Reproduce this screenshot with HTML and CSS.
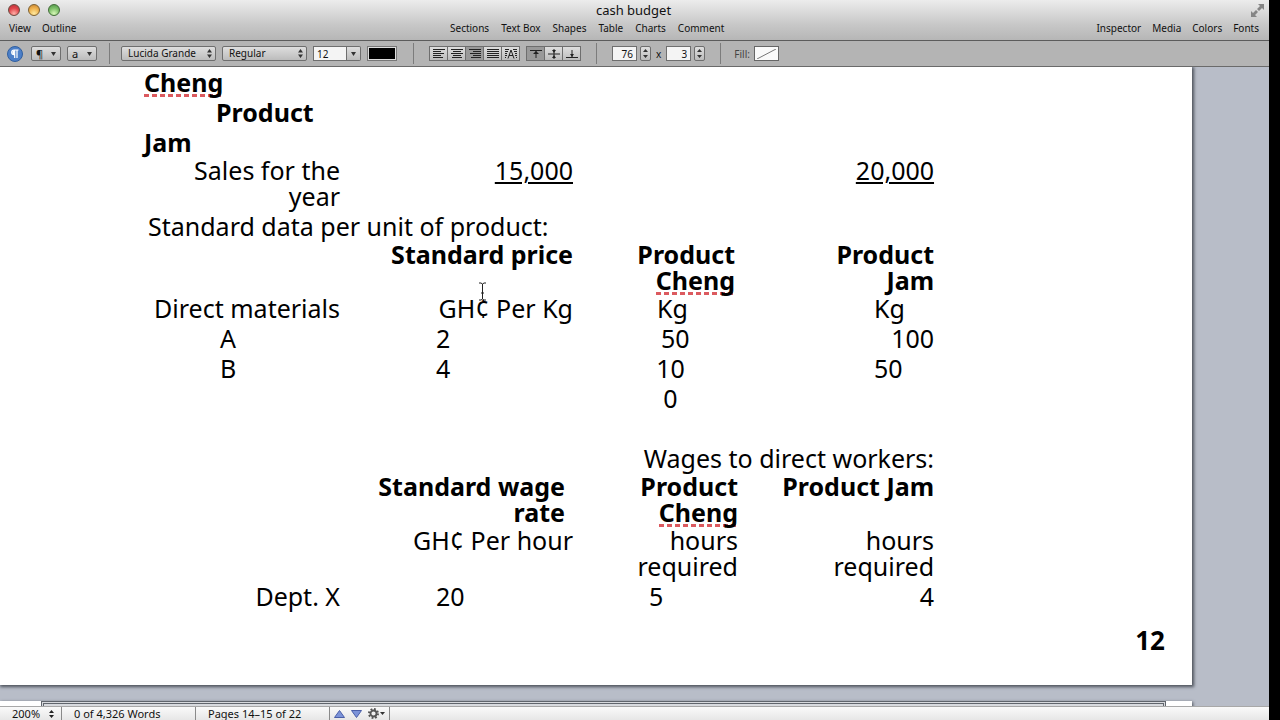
FILE: index.html
```html
<!DOCTYPE html>
<html lang="en">
<head>
<meta charset="utf-8">
<title>cash budget</title>
<link rel="stylesheet" href="styles.css">
</head>
<body>
<div class="window">
  <header class="chrome">
    <div class="titlebar">
      <div class="lights">
        <button class="light light-red" aria-label="Close"></button>
        <button class="light light-yellow" aria-label="Minimize"></button>
        <button class="light light-green" aria-label="Zoom"></button>
      </div>
      <h1 class="title">cash budget</h1>
      <button class="fullscreen" aria-label="Full screen">
        <svg width="15" height="15" viewBox="0 0 15 15"><path d="M8 1h6v6l-2-2-3 3-2-2 3-3zM1 8l2 2 3-3 2 2-3 3 2 2H1z" fill="#858585"/></svg>
      </button>
    </div>
    <nav class="menu">
      <div class="menu-group menu-first"><button>View</button><button>Outline</button></div>
      <div class="menu-group menu-middle"><button>Sections</button><button>Text Box</button><button>Shapes</button><button>Table</button><button>Charts</button><button>Comment</button></div>
      <div class="menu-group menu-last"><button>Inspector</button><button>Media</button><button>Colors</button><button>Fonts</button></div>
    </nav>
  </header>

  <div class="format">
    <section class="fgroup fgroup-styles">
      <button class="styles" aria-label="Styles"><svg width="16" height="16" viewBox="0 0 16 16"><circle cx="8" cy="8" r="7.5" fill="#4c7fc8" stroke="#315f9f"/><path d="M11.5 4H7a2.3 2.3 0 0 0 0 4.6h.7V12M7.7 4v8M10 4v8" fill="none" stroke="#fff" stroke-width="1.2"/><path d="M7.5 4a2.2 2.2 0 0 0 0 4.4z" fill="#fff"/></svg></button>
      <button class="btn drop" aria-label="Paragraph style"><span>¶</span><svg width="5" height="4" viewBox="0 0 5 4"><path d="M0 0h5L2.500 4z" fill="#333"/></svg></button>
      <button class="btn drop" aria-label="Character style"><span>a</span><svg width="5" height="4" viewBox="0 0 5 4"><path d="M0 0h5L2.500 4z" fill="#333"/></svg></button>
    </section>
    <section class="fgroup fgroup-font">
      <div class="pick pick-family">
        <select class="btn" aria-label="Font family"><option>Lucida Grande</option></select>
        <svg class="updown" width="5" height="9" viewBox="0 0 5 9"><path d="M0 3.500L2.500 0 5 3.500zM0 5.500h5L2.500 9z" fill="#333"/></svg>
      </div>
      <div class="pick pick-face">
        <select class="btn" aria-label="Typeface"><option>Regular</option></select>
        <svg class="updown" width="5" height="9" viewBox="0 0 5 9"><path d="M0 3.500L2.500 0 5 3.500zM0 5.500h5L2.500 9z" fill="#333"/></svg>
      </div>
      <div class="size">
        <input class="field" type="text" value="12" aria-label="Font size">
        <button class="btn" aria-label="Font sizes"><svg width="5" height="4" viewBox="0 0 5 4"><path d="M0 0h5L2.500 4z" fill="#333"/></svg></button>
      </div>
      <button class="swatch swatch-black" aria-label="Text color"></button>
    </section>
    <section class="fgroup fgroup-align">
      <div class="segments">
        <button class="btn" aria-label="Align left"><svg width="12" height="10" viewBox="0 0 12 10"><path d="M0 .5h12M0 2.500h8M0 4.500h11M0 6.500h8M0 8.500h10" stroke="#222"/></svg></button>
        <button class="btn" aria-label="Align center"><svg width="12" height="10" viewBox="0 0 12 10"><path d="M0 .5h12M2 2.500h8M0 4.500h12M2 6.500h8M1 8.500h10" stroke="#222"/></svg></button>
        <button class="btn pressed" aria-label="Align right"><svg width="12" height="10" viewBox="0 0 12 10"><path d="M0 .5h12M4 2.500h8M1 4.500h11M4 6.500h8M2 8.500h10" stroke="#222"/></svg></button>
        <button class="btn" aria-label="Justify"><svg width="12" height="10" viewBox="0 0 12 10"><path d="M0 .5h12M0 2.500h12M0 4.500h12M0 6.500h12M0 8.500h12" stroke="#222"/></svg></button>
        <button class="btn" aria-label="Automatic alignment"><svg width="12" height="10" viewBox="0 0 12 10"><path d="M0 .5h4M8 .5h4M0 2.500h3M9 2.500h3M0 4.500h2M10 4.500h2M0 6.500h2M10 6.500h2M0 8.500h1M11 8.500h1M3 9.500L6 1l3 8.500M4 6.500h4" fill="none" stroke="#222"/></svg></button>
      </div>
      <div class="segments">
        <button class="btn pressed" aria-label="Align top"><svg width="12" height="10" viewBox="0 0 12 10"><path d="M0 1.500h12M6 9V2" stroke="#222"/><path d="M3 5l3-3 3 3z" fill="#222"/></svg></button>
        <button class="btn" aria-label="Align middle"><svg width="12" height="10" viewBox="0 0 12 10"><path d="M0 5h12M6 0v10" stroke="#222"/><path d="M4 1h4L6 4zM4 9h4L6 6z" fill="#222"/></svg></button>
        <button class="btn" aria-label="Align bottom"><svg width="12" height="10" viewBox="0 0 12 10"><path d="M0 8.500h12M6 1v7" stroke="#222"/><path d="M4 5h4L6 8z" fill="#222"/></svg></button>
      </div>
    </section>
    <section class="fgroup fgroup-grid">
      <input class="field number" type="text" value="76" aria-label="Rows">
      <button class="btn step" aria-label="Change rows"><svg width="5" height="9" viewBox="0 0 5 9"><path d="M0 3L2.500 0 5 3zM0 6h5L2.500 9z" fill="#333"/></svg></button>
      <span class="times">x</span>
      <input class="field number" type="text" value="3" aria-label="Columns">
      <button class="btn step" aria-label="Change columns"><svg width="5" height="9" viewBox="0 0 5 9"><path d="M0 3L2.500 0 5 3zM0 6h5L2.500 9z" fill="#333"/></svg></button>
    </section>
    <section class="fgroup fgroup-fill">
      <label for="fill">Fill:</label>
      <button class="swatch" id="fill"><svg width="19" height="10" viewBox="0 0 19 10"><path d="M0 10L19 0" stroke="#777"/></svg></button>
    </section>
  </div>

  <main class="desk">
    <article class="page">
      <table class="sheet">
        <colgroup><col class="c1"><col class="c2"><col class="c3"><col class="c4"></colgroup>
        <tbody>
          <tr><td colspan="4" class="left bold"><span class="typo">Cheng</span></td></tr>
          <tr><td colspan="4" class="left bold in-72">Product</td></tr>
          <tr><td colspan="4" class="left bold">Jam</td></tr>
          <tr class="tight"><td>Sales for the<br>year</td><td class="total">15,000</td><td></td><td class="total">20,000</td></tr>
          <tr><td colspan="4" class="left in-4">Standard data per unit of product:</td></tr>
          <tr class="tight bold"><td></td><td>Standard price</td><td class="end-3">Product<br><span class="typo">Cheng</span></td><td>Product<br>Jam</td></tr>
          <tr class="tight"><td>Direct materials</td><td>GH¢ Per Kg<svg class="caret" width="9" height="19" viewBox="0 0 9 19"><path d="M1 1h2l1.500 1L6 1h2M1 18h2l1.500-1L6 18h2M4.500 2v15M3 11h3" fill="none" stroke="#222"/></svg></td><td class="left in-84">Kg</td><td class="left in-136">Kg</td></tr>
          <tr><td class="left in-76">A</td><td class="left in-96">2</td><td class="left in-88">50</td><td>100</td></tr>
          <tr class="loose"><td class="left in-76">B</td><td class="left in-96">4</td><td class="stack">10<br>0</td><td class="left in-136">50</td></tr>
          <tr class="blank"><td colspan="4"></td></tr>
          <tr><td colspan="4">Wages to direct workers:</td></tr>
          <tr class="tight bold"><td></td><td class="end-8">Standard wage<br>rate</td><td>Product<br><span class="typo">Cheng</span></td><td>Product Jam</td></tr>
          <tr class="tight"><td></td><td>GH¢ Per hour</td><td>hours<br>required</td><td>hours<br>required</td></tr>
          <tr><td>Dept. X</td><td class="left in-96">20</td><td class="left in-76">5</td><td>4</td></tr>
        </tbody>
      </table>
      <footer class="folio">12</footer>
    </article>
    <article class="page page-next"><div class="textbox"></div></article>
  </main>

  <footer class="status">
    <button class="cell zoom">200%<svg width="5" height="8" viewBox="0 0 5 8"><path d="M0 3L2.500 0 5 3zM0 5h5L2.500 8z" fill="#222"/></svg></button>
    <span class="cell words">0 of 4,326 Words</span>
    <button class="cell pages">Pages 14–15 of 22</button>
    <div class="cell nav">
      <button aria-label="Previous page"><svg width="11" height="8" viewBox="0 0 11 8"><path d="M.5 7.500L5.500.5l5 7z" fill="#7c93d8" stroke="#4a5fa8"/></svg></button>
      <button aria-label="Next page"><svg width="11" height="8" viewBox="0 0 11 8"><path d="M.5.5h10l-5 7z" fill="#7c93d8" stroke="#4a5fa8"/></svg></button>
      <button aria-label="Actions"><svg width="17" height="11" viewBox="0 0 17 11"><circle cx="5.500" cy="5.500" r="4.500" fill="none" stroke="#555" stroke-width="2" stroke-dasharray="1.800 1.730"/><circle cx="5.500" cy="5.500" r="3" fill="none" stroke="#555" stroke-width="1.800"/><path d="M12 4h5l-2.500 3z" fill="#333"/></svg></button>
    </div>
  </footer>
</div>
</body>
</html>
```

FILE: styles.css
```css
* { box-sizing: border-box; }

body {
  margin: 0;
  background: #000;
  font-family: "Noto Sans", "Open Sans", sans-serif;
  font-size: 10px;
  color: #111;
}

button, input, select {
  font: inherit;
  color: inherit;
  margin: 0;
  padding: 0;
}

button {
  border: 0;
  background: none;
}

svg { display: block; }

.window {
  display: flex;
  flex-direction: column;
  height: 100vh;
  margin-right: 11px;
  background: #b8bdc8;
}

/* Title and menu */
.chrome {
  flex: none;
  background: linear-gradient(#ececec, #c8c8c8 60%, #b6b6b6);
  border-bottom: 1px solid #5c5c5c;
}

.titlebar {
  display: grid;
  grid-template-columns: 1fr auto 1fr;
  align-items: center;
  height: 20px;
  padding: 0 4px 0 8px;
}

.lights { display: flex; gap: 8px; }

.light {
  width: 12px;
  height: 12px;
  border-radius: 50%;
  border: 1px solid #6b4a40;
}

.light-red { background: radial-gradient(circle at 50% 85%, #ffb0a8, #e0444a 55%, #b8323a); }
.light-yellow { background: radial-gradient(circle at 50% 85%, #ffeaa0, #eeb04c 55%, #c48030); border-color: #7d6030; }
.light-green { background: radial-gradient(circle at 50% 85%, #d8f8b8, #7cbf68 55%, #4f9448); border-color: #416b38; }

.title {
  margin: 0;
  padding-right: 6px;
  font-size: 13px;
  line-height: 20px;
  font-weight: 400;
}

.fullscreen { justify-self: end; }

.menu {
  display: flex;
  height: 20px;
  padding: 0 10px 0 9px;
}

.menu-group {
  display: flex;
  gap: 11px;
  line-height: 16px;
  align-items: flex-start;
}

.menu-first { flex: 0 0 441px; }
.menu-middle { gap: 12px; }
.menu-last { margin-left: auto; }

/* Format bar */
.format {
  flex: none;
  display: flex;
  height: 26px;
  background: #b4b4b4;
  border-bottom: 1px solid #6a6a6a;
}

.fgroup {
  display: flex;
  align-items: center;
  gap: 6px;
  padding: 0 16px 0 12px;
  margin: 2px 0;
  border-left: 1px solid #7c7c7c;
}

.fgroup-styles { padding: 0 12px 0 7px; border-left: 0; }
.fgroup-font { padding-left: 11px; }
.fgroup-align { padding: 0 15px; }
.fgroup-grid { gap: 3px; padding: 0 15px; }
.fgroup-fill { gap: 4px; padding-left: 13px; color: #444; }

.styles { margin-right: 2px; }

.btn {
  height: 15px;
  border: 1px solid #6e6e6e;
  border-radius: 2px;
  background: linear-gradient(#dedede, #bcbcbc);
}

.drop {
  display: flex;
  align-items: center;
  justify-content: space-between;
  width: 30px;
  padding: 0 4px;
  line-height: 12px;
  font-size: 11px;
}

.pick { position: relative; }
.pick-family { width: 95px; }
.pick-face { width: 85px; }

.pick select {
  display: block;
  width: 100%;
  padding-left: 6px;
  appearance: none;
  line-height: 13px;
}

.updown {
  position: absolute;
  right: 4px;
  top: 3px;
}

.field {
  width: 34px;
  height: 15px;
  padding: 0 3px;
  border: 1px solid #6e6e6e;
  background: #f4f4f4;
}

.size { display: flex; }

.size .btn {
  display: grid;
  place-items: center;
  width: 14px;
  border-left: 0;
  border-radius: 0 2px 2px 0;
}

.swatch {
  display: grid;
  place-items: center;
  width: 25px;
  height: 15px;
  border: 1px solid #666;
  background: #fafafa;
}

.swatch-black {
  width: 30px;
  border-color: #777;
  background: #000;
  box-shadow: inset 0 0 0 1px #ddd;
}

.segments { display: flex; }

.segments .btn {
  display: grid;
  place-items: center;
  width: 19px;
  margin-right: -1px;
  border-radius: 0;
}

.segments .btn:last-child { margin-right: 0; }
.segments .pressed { background: #999; }

.number { width: 25px; text-align: right; }

.step {
  display: grid;
  place-items: center;
  width: 11px;
}

.times { padding: 0 2px; }

/* Document */
.desk {
  flex: 1;
  min-height: 0;
  overflow: hidden;
}

.page {
  margin-right: 77px;
  padding: 0 27px 30px 0;
  background: #fff;
  box-shadow: 1px 1px 3px 1px #4e535c;
}

.page-next {
  margin-top: 16px;
  padding: 0 26px 0 41px;
  box-shadow: 1px 1px 3px #4e535c;
}

.textbox {
  height: 40px;
  border: 3px double #60656c;
  background: #d8dade;
}

.sheet {
  table-layout: fixed;
  width: 790px;
  margin-left: 144px;
  border-collapse: collapse;
  font-size: 25px;
  line-height: 26px;
  color: #000;
}

.c1 { width: 196px; }
.c2 { width: 233px; }
.c3 { width: 165px; }
.c4 { width: 196px; }

.sheet td {
  position: relative;
  padding: 2px 0;
  text-align: right;
  vertical-align: top;
}

.sheet .tight td { padding-top: 0; }
.sheet .loose td { padding-top: 0; padding-bottom: 0; line-height: 30px; }
.sheet .blank td { height: 30px; }
.sheet .left { text-align: left; }
.sheet .in-4 { padding-left: 4px; }
.sheet .in-72 { padding-left: 72px; }
.sheet .in-76 { padding-left: 76px; }
.sheet .in-84 { padding-left: 84px; }
.sheet .in-88 { padding-left: 88px; }
.sheet .in-96 { padding-left: 96px; }
.sheet .in-136 { padding-left: 136px; }
.sheet .end-3 { padding-right: 3px; }
.sheet .end-8 { padding-right: 8px; }
.sheet .stack { padding-left: 30px; text-align: center; }
.bold { font-weight: 700; }

.total {
  text-decoration: underline;
  text-decoration-thickness: 2px;
  text-underline-offset: 2px;
}

.typo {
  background: repeating-linear-gradient(90deg, #dc5a5f 0 5px, transparent 5px 8px) 0 29px / 100% 3px no-repeat;
}

.caret {
  position: absolute;
  right: 86px;
  top: -13px;
}

.folio {
  margin-top: 14px;
  text-align: right;
  font-size: 26px;
  line-height: 30px;
  font-weight: 700;
  color: #000;
}

/* Status bar */
.status {
  flex: none;
  display: flex;
  height: 14px;
  background: linear-gradient(#fafafa, #e6e6e6);
  border-top: 1px solid #a8a8a8;
  font-size: 11px;
}

.cell {
  display: flex;
  align-items: center;
  height: 13px;
  line-height: 13px;
  border-right: 1px solid #8a8a8a;
}

.zoom { width: 62px; padding: 0 7px 0 12px; justify-content: space-between; }
.words { width: 134px; padding-left: 12px; }
.pages { width: 134px; padding-left: 12px; }
.nav { gap: 6px; width: 60px; padding-left: 4px; }
```
